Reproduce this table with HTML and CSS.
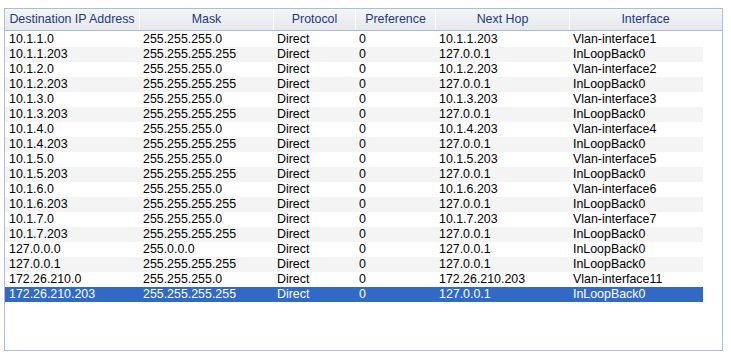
FILE: index.html
```html
<!DOCTYPE html>
<html>
<head>
<meta charset="utf-8">
<link rel="stylesheet" href="styles.css">
</head>
<body>
<div class="panel">
  <div class="head">
    <div class="hc c1">Destination IP Address</div>
    <div class="hc c2">Mask</div>
    <div class="hc c3">Protocol</div>
    <div class="hc c4">Preference</div>
    <div class="hc c5">Next Hop</div>
    <div class="hc c6h">Interface</div>
  </div>
  <div class="body">
    <div class="row"><span>10.1.1.0</span><span>255.255.255.0</span><span>Direct</span><span>0</span><span>10.1.1.203</span><span>Vlan-interface1</span></div>
    <div class="row"><span>10.1.1.203</span><span>255.255.255.255</span><span>Direct</span><span>0</span><span>127.0.0.1</span><span>InLoopBack0</span></div>
    <div class="row"><span>10.1.2.0</span><span>255.255.255.0</span><span>Direct</span><span>0</span><span>10.1.2.203</span><span>Vlan-interface2</span></div>
    <div class="row"><span>10.1.2.203</span><span>255.255.255.255</span><span>Direct</span><span>0</span><span>127.0.0.1</span><span>InLoopBack0</span></div>
    <div class="row"><span>10.1.3.0</span><span>255.255.255.0</span><span>Direct</span><span>0</span><span>10.1.3.203</span><span>Vlan-interface3</span></div>
    <div class="row"><span>10.1.3.203</span><span>255.255.255.255</span><span>Direct</span><span>0</span><span>127.0.0.1</span><span>InLoopBack0</span></div>
    <div class="row"><span>10.1.4.0</span><span>255.255.255.0</span><span>Direct</span><span>0</span><span>10.1.4.203</span><span>Vlan-interface4</span></div>
    <div class="row"><span>10.1.4.203</span><span>255.255.255.255</span><span>Direct</span><span>0</span><span>127.0.0.1</span><span>InLoopBack0</span></div>
    <div class="row"><span>10.1.5.0</span><span>255.255.255.0</span><span>Direct</span><span>0</span><span>10.1.5.203</span><span>Vlan-interface5</span></div>
    <div class="row"><span>10.1.5.203</span><span>255.255.255.255</span><span>Direct</span><span>0</span><span>127.0.0.1</span><span>InLoopBack0</span></div>
    <div class="row"><span>10.1.6.0</span><span>255.255.255.0</span><span>Direct</span><span>0</span><span>10.1.6.203</span><span>Vlan-interface6</span></div>
    <div class="row"><span>10.1.6.203</span><span>255.255.255.255</span><span>Direct</span><span>0</span><span>127.0.0.1</span><span>InLoopBack0</span></div>
    <div class="row"><span>10.1.7.0</span><span>255.255.255.0</span><span>Direct</span><span>0</span><span>10.1.7.203</span><span>Vlan-interface7</span></div>
    <div class="row"><span>10.1.7.203</span><span>255.255.255.255</span><span>Direct</span><span>0</span><span>127.0.0.1</span><span>InLoopBack0</span></div>
    <div class="row"><span>127.0.0.0</span><span>255.0.0.0</span><span>Direct</span><span>0</span><span>127.0.0.1</span><span>InLoopBack0</span></div>
    <div class="row"><span>127.0.0.1</span><span>255.255.255.255</span><span>Direct</span><span>0</span><span>127.0.0.1</span><span>InLoopBack0</span></div>
    <div class="row"><span>172.26.210.0</span><span>255.255.255.0</span><span>Direct</span><span>0</span><span>172.26.210.203</span><span>Vlan-interface11</span></div>
    <div class="row selected"><span>172.26.210.203</span><span>255.255.255.255</span><span>Direct</span><span>0</span><span>127.0.0.1</span><span>InLoopBack0</span></div>
  </div>
</div>
</body>
</html>
```
FILE: styles.css
```css
html, body {
  margin: 0;
  padding: 0;
  background: #ffffff;
}
body {
  padding: 8px 0 0 4px;
  font-family: "Liberation Sans", Arial, sans-serif;
  font-size: 12.4px;
}
.panel {
  width: 717px;
  height: 341px;
  border: 1px solid #a9bfd8;
  background: #ffffff;
}
.head {
  display: grid;
  grid-template-columns: 134px 134px 82px 80px 134px 152px;
  height: 21px;
  background: linear-gradient(#f4f5f7, #e6e8ec);
  border-bottom: 1px solid #a6bde0;
  margin-bottom: 1px;
}
.hc {
  color: #1c3a7e;
  text-align: center;
  line-height: 21px;
  white-space: nowrap;
  border-left: 1px solid #ffffff;
}
.hc.c1 {
  border-left: none;
}
.body {
  display: flex;
  flex-direction: column;
}
.row {
  display: grid;
  grid-template-columns: 134px 134px 82px 80px 134px 134px;
  width: 698px;
  height: 15px;
  line-height: 15px;
  color: #000000;
}
.row:nth-child(even) {
  background: #f4f4f4;
}
.row span {
  padding-left: 4px;
  white-space: nowrap;
  overflow: hidden;
}
.row.selected {
  background: #316ac5;
  color: #ffffff;
}
```
